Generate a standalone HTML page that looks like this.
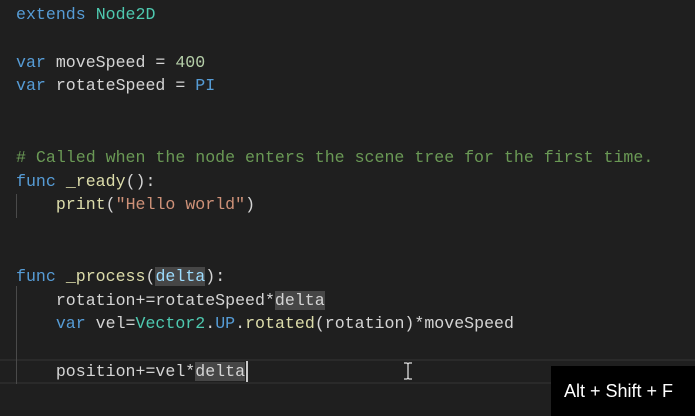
<!DOCTYPE html>
<html><head><style>
body{margin:0;background:#1f1f1f;width:695px;height:416px;overflow:hidden;position:relative}
.code{position:absolute;left:16px;top:3px;font-family:"Liberation Mono",monospace;font-size:16.6px;line-height:23.8px;color:#d4d4d4;white-space:pre}
.k{color:#569cd6}.t{color:#4ec9b0}.n{color:#b5cea8}.c{color:#6a9955}.f{color:#dcdcaa}.s{color:#ce9178}.p{color:#9cdcfe}
.h{background:#464646}
.cur{position:absolute;left:0;top:359px;width:695px;height:21px;border-top:2px solid #2a2a2a;border-bottom:2px solid #2a2a2a}
.g{position:absolute;left:16px;width:1px;background:#4a4a4a}
.tip{position:absolute;left:551px;top:366px;width:144px;height:50px;background:#000;color:#fff;font-family:"Liberation Sans",sans-serif;font-size:18px;line-height:50px;text-indent:13px}
.caret{position:absolute;left:246px;top:361px;width:2px;height:21px;background:#c8c8c8}
</style></head><body>
<div class="cur"></div>
<div class="g" style="top:194px;height:24px"></div>
<div class="g" style="top:286px;height:98px"></div>
<div class="code"><span class="k">extends</span> <span class="t">Node2D</span>

<span class="k">var</span> moveSpeed = <span class="n">400</span>
<span class="k">var</span> rotateSpeed = <span class="k">PI</span>


<span class="c"># Called when the node enters the scene tree for the first time.</span>
<span class="k">func</span> <span class="f">_ready</span>():
    <span class="f">print</span>(<span class="s">"Hello world"</span>)


<span class="k">func</span> <span class="f">_process</span>(<span class="p h">delta</span>):
    rotation+=rotateSpeed*<span class="h">delta</span>
    <span class="k">var</span> vel=<span class="t">Vector2</span>.<span class="k">UP</span>.<span class="f">rotated</span>(rotation)*moveSpeed

    position+=vel*<span class="h">delta</span></div>
<div class="caret"></div>
<svg style="position:absolute;left:402px;top:362px" width="12" height="18"><path d="M2 1h3l1 1 1-1h3M6 2v14M2 17h3l1-1 1 1h3" stroke="#ddd" stroke-width="1.3" fill="none"/></svg>
<div class="tip">Alt + Shift + F</div>
</body></html>
